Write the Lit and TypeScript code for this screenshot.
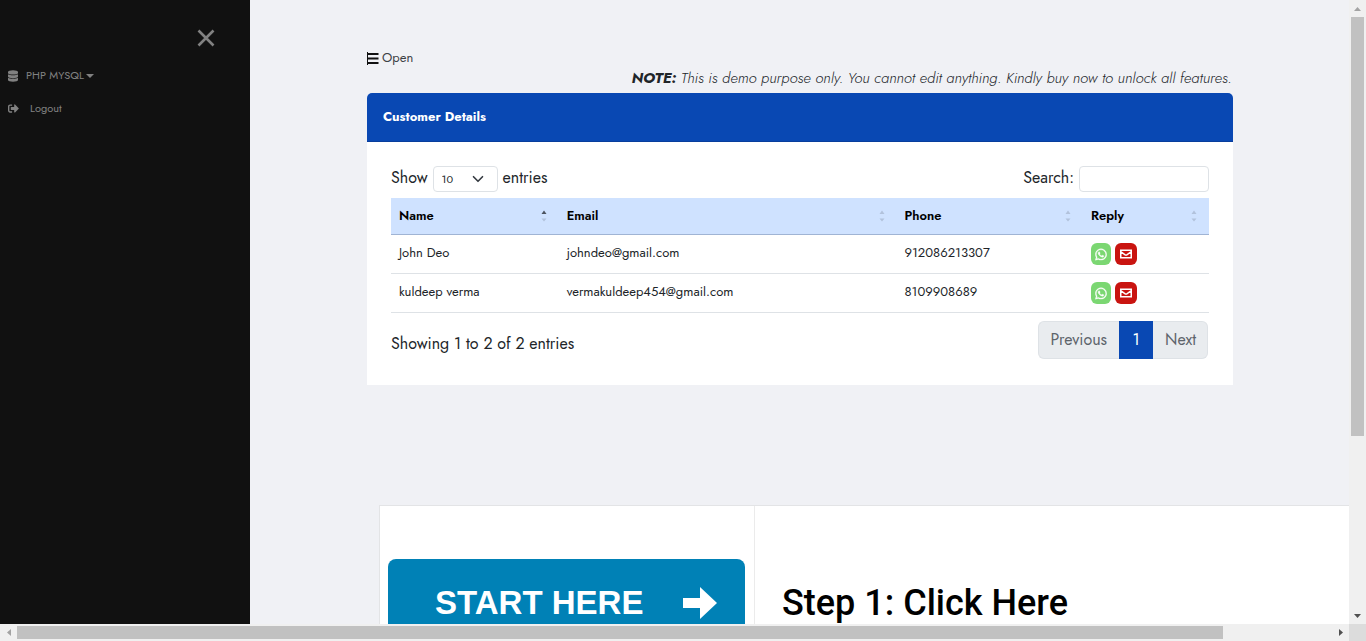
import { LitElement, html, css, svg } from "lit";
import { customElement, property, state } from "lit/decorators.js";

interface Customer {
  name: string;
  email: string;
  phone: string;
}

const CUSTOMERS: Customer[] = [
  { name: "John Deo", email: "johndeo@gmail.com", phone: "912086213307" },
  { name: "kuldeep verma", email: "vermakuldeep454@gmail.com", phone: "8109908689" },
];

const COLUMNS = ["Name", "Email", "Phone", "Reply"];

const whatsappPath = svg`<path fill="currentColor" stroke="currentColor" stroke-width="14" d="M380.9 97.1C339 55.1 283.2 32 223.9 32c-122.4 0-222 99.6-222 222 0 39.1 10.2 77.3 29.6 111L0 480l117.7-30.9c32.400 17.700 68.900 27 106.100 27h.1c122.300 0 224.100-99.600 224.100-222 0-59.300-25.200-115-67.100-157zm-157 341.600c-33.200 0-65.700-8.900-94-25.700l-6.700-4-69.800 18.300L72 359.200l-4.400-7c-18.500-29.400-28.200-63.300-28.200-98.200 0-101.700 82.800-184.500 184.600-184.500 49.300 0 95.600 19.200 130.400 54.100 34.800 34.900 56.200 81.200 56.100 130.500 0 101.800-84.900 184.600-186.600 184.600zm101.200-138.200c-5.500-2.800-32.800-16.200-37.900-18-5.100-1.900-8.800-2.800-12.500 2.800-3.700 5.600-14.300 18-17.600 21.800-3.200 3.700-6.500 4.200-12 1.400-32.600-16.300-54-29.100-75.500-66-5.700-9.800 5.700-9.100 16.300-30.300 1.800-3.700.9-6.900-.5-9.700-1.400-2.800-12.500-30.100-17.100-41.200-4.500-10.800-9.100-9.300-12.500-9.500-3.200-.2-6.900-.2-10.600-.2-3.700 0-9.700 1.400-14.800 6.900-5.100 5.600-19.400 19-19.400 46.300 0 27.300 19.900 53.700 22.600 57.400 2.800 3.700 39.100 59.700 94.800 83.800 35.200 15.200 49 16.500 66.600 13.900 10.700-1.600 32.800-13.400 37.400-26.400 4.600-13 4.600-24.100 3.200-26.400-1.300-2.500-5-3.900-10.500-6.600z"/>`;

@customElement("side-menu")
class SideMenu extends LitElement {
  static styles = css`
    :host {
      display: block;
      background: #111;
      color: #818181;
      font-size: 11px;
      line-height: 17px;
    }
    .top {
      display: flex;
      justify-content: flex-end;
      padding: 29px 35px 20px 0;
    }
    .close {
      display: block;
      padding: 0;
      border: 0;
      background: none;
      color: inherit;
      height: 18px;
    }
    .close svg { display: block; }
    .links {
      display: flex;
      flex-direction: column;
      gap: 16px;
      padding-left: 8px;
    }
    .link {
      display: flex;
      align-items: center;
      color: inherit;
      text-decoration: none;
    }
    .database { margin-right: 8px; }
    .logout { margin-right: 11px; }
    .caret {
      margin-left: 2px;
      border: 4px solid transparent;
      border-top-color: currentColor;
      border-bottom: 0;
    }
  `;

  render() {
    return html`
      <div class="top">
        <button class="close" aria-label="Close menu">
          <svg width="18" height="18" viewBox="0 0 18 18" stroke="currentColor" stroke-width="2.600">
            <path d="M1.500 1.500 16.500 16.500M16.500 1.500 1.500 16.500" />
          </svg>
        </button>
      </div>
      <nav class="links">
        <a class="link" href="#">
          <svg class="database" width="10" height="12" viewBox="0 0 448 512" fill="currentColor">
            <path d="M448 73.100v45.800C448 159.100 347.700 192 224 192S0 159.100 0 118.900V73.100C0 32.900 100.300 0 224 0s224 32.900 224 73.100zM448 176v102.900C448 319.100 347.700 352 224 352S0 319.100 0 278.900V176c48.100 33.100 136.200 48.600 224 48.600S399.900 209.100 448 176zm0 160v102.900C448 479.100 347.700 512 224 512S0 479.100 0 438.900V336c48.100 33.100 136.200 48.600 224 48.600S399.900 369.100 448 336z" />
          </svg>
          PHP MYSQL<span class="caret"></span>
        </a>
        <a class="link" href="#">
          <svg class="logout" width="11" height="11" viewBox="0 0 512 512" fill="currentColor">
            <path d="M497 273 329 441c-15 15-41 4.500-41-17v-96H152c-13.300 0-24-10.700-24-24v-96c0-13.300 10.700-24 24-24h136V88c0-21.400 25.900-32 41-17l168 168c9.300 9.400 9.300 24.600 0 34zM192 436v-40c0-6.600-5.400-12-12-12H96c-17.700 0-32-14.300-32-32V160c0-17.700 14.300-32 32-32h84c6.600 0 12-5.400 12-12V76c0-6.600-5.400-12-12-12H96c-53 0-96 43-96 96v192c0 53 43 96 96 96h84c6.600 0 12-5.400 12-12z" />
          </svg>
          Logout
        </a>
      </nav>
    `;
  }
}

@customElement("customer-card")
class CustomerCard extends LitElement {
  @state() private query = "";

  static styles = css`
    :host {
      display: block;
      background: #fff;
      border-radius: 5px 5px 0 0;
      color: #212529;
      font-size: 16px;
      line-height: 24px;
    }
    .title {
      margin: 0;
      padding: 12px 16px;
      border-bottom: 1px solid #083d9c;
      border-radius: 5px 5px 0 0;
      background: #0948b3;
      color: #fff;
      font-size: 13px;
      line-height: 24px;
      font-weight: 700;
    }
    .body { padding: 24px 24px 26px; }
    .tools {
      display: flex;
      justify-content: space-between;
      margin-bottom: 6px;
    }
    .field {
      display: flex;
      align-items: flex-start;
      gap: 5px;
    }
    .pick {
      display: grid;
      align-items: center;
    }
    .pick > * { grid-area: 1 / 1; }
    .pick svg {
      justify-self: end;
      margin-right: 14px;
      pointer-events: none;
    }
    .control {
      box-sizing: border-box;
      height: 26px;
      padding: 0 8px;
      border: 1px solid #dee2e6;
      border-radius: 4px;
      background: #fff;
      color: #212529;
      font-family: inherit;
      font-size: 11px;
    }
    select.control {
      width: 65px;
      appearance: none;
    }
    input.control { width: 130px; }
    .table {
      width: 100%;
      table-layout: fixed;
      border-collapse: separate;
      border-spacing: 0;
      font-size: 13px;
      line-height: 20px;
    }
    .table th {
      box-sizing: border-box;
      padding: 8px;
      border-bottom: 1px solid #a0b4d4;
      background: #cfe2ff;
      color: #000;
      font-weight: 600;
      text-align: left;
    }
    .table td {
      height: 22px;
      padding: 8px;
      border-bottom: 1px solid #dee2e6;
      line-height: 20px;
      vertical-align: top;
    }
    .c0 { width: 20.500%; }
    .c1 { width: 41.300%; }
    .c2 { width: 22.800%; }
    .head {
      display: flex;
      align-items: center;
      justify-content: space-between;
      padding-right: 4px;
    }
    .sort {
      display: block;
      color: #b2c2dc;
    }
    .up { color: #4c535f; }
    .reply {
      display: flex;
      gap: 4px;
    }
    .badge {
      display: grid;
      place-items: center;
      height: 22px;
      border-radius: 6px;
      color: #fff;
    }
    .chat { width: 20px; background: #7bd772; }
    .mail { width: 22px; background: #c91410; }
    .foot {
      display: flex;
      justify-content: space-between;
      align-items: center;
      padding: 8px 1px 0 0;
    }
    .info { padding-top: 7px; }
    .pages { display: flex; }
    .page {
      box-sizing: border-box;
      height: 38px;
      padding: 0 12px;
      border: 1px solid #dee2e6;
      background: #e9ecef;
      color: #5d646b;
      font: inherit;
    }
    .prev {
      border-right: 0;
      border-radius: 6px 0 0 6px;
    }
    .next {
      padding: 0 11px 0 12px;
      border-left: 0;
      border-radius: 0 6px 6px 0;
    }
    .current {
      width: 34px;
      border-color: #0948b3;
      background: #0948b3;
      color: #fff;
    }
  `;

  private onSearch(e: Event) {
    this.query = (e.target as HTMLInputElement).value.toLowerCase();
  }

  render() {
    const rows = CUSTOMERS.filter((c) =>
      [c.name, c.email, c.phone].some((v) => v.toLowerCase().includes(this.query))
    );
    return html`
      <h1 class="title">Customer Details</h1>
      <div class="body">
        <div class="tools">
          <div class="field">
            <label for="length">Show</label>
            <span class="pick">
              <select id="length" class="control">
                <option>10</option>
                <option>25</option>
                <option>50</option>
                <option>100</option>
              </select>
              <svg width="12" height="12" viewBox="0 0 16 16" fill="none" stroke="#343a40" stroke-width="2.200" stroke-linecap="round" stroke-linejoin="round">
                <path d="m2 5 6 6 6-6" />
              </svg>
            </span>
            <label for="length">entries</label>
          </div>
          <div class="field">
            <label for="search">Search:</label>
            <input id="search" class="control" type="search" @input=${this.onSearch} />
          </div>
        </div>
        <table class="table">
          <thead>
            <tr>
              ${COLUMNS.map(
                (label, i) => html`<th class="c${i}">
                  <div class="head">
                    ${label}
                    <svg class="sort" width="6" height="12" viewBox="0 0 6 12" fill="currentColor">
                      <path class=${i === 0 ? "up" : ""} d="M3 0.500 5.500 4H0.500z" />
                      <path d="M3 11.500 5.500 8.500H0.500z" />
                    </svg>
                  </div>
                </th>`
              )}
            </tr>
          </thead>
          <tbody>
            ${rows.map(
              (c) => html`<tr>
                <td>${c.name}</td>
                <td>${c.email}</td>
                <td>${c.phone}</td>
                <td>
                  <div class="reply">
                    <a class="badge chat" href="#" aria-label="WhatsApp">
                      <svg width="12" height="13" viewBox="0 0 448 512">${whatsappPath}</svg>
                    </a>
                    <a class="badge mail" href="#" aria-label="Email">
                      <svg width="12" height="10" viewBox="0 0 12 10" fill="none" stroke="currentColor" stroke-width="1.500">
                        <path d="M.75 1.250h10.500v7.500H.75zM1 2.750 4.800 5.700q1.200.8 2.400 0L11 2.750" />
                      </svg>
                    </a>
                  </div>
                </td>
              </tr>`
            )}
          </tbody>
        </table>
        <div class="foot">
          <div class="info">Showing 1 to 2 of 2 entries</div>
          <div class="pages">
            <button class="page prev">Previous</button>
            <button class="page current">1</button>
            <button class="page next">Next</button>
          </div>
        </div>
      </div>
    `;
  }
}

@customElement("promo-banner")
class PromoBanner extends LitElement {
  static styles = css`
    :host {
      display: grid;
      grid-template-columns: 375px 1fr;
      box-sizing: border-box;
      height: 250px;
      border: 1px solid #e3e4e6;
      border-right: 0;
      background: #fff;
    }
    .left {
      box-sizing: border-box;
      padding: 53px 9px 0 8px;
      border-right: 1px solid #ebebeb;
    }
    .start {
      display: flex;
      align-items: center;
      justify-content: space-between;
      height: 88px;
      padding: 0 28px 0 47px;
      border-radius: 8px;
      background: #0081b6;
      color: #fff;
      font: bold 33px "Liberation Sans", Arial, sans-serif;
      text-decoration: none;
      white-space: nowrap;
    }
    .step {
      margin: 0;
      padding: 75px 0 0 27px;
      color: #000;
      font: 500 36px/44px Roboto, sans-serif;
    }
  `;

  render() {
    return html`
      <div class="left">
        <a class="start" href="#">
          START HERE
          <svg width="34" height="32" viewBox="0 0 34 32" fill="currentColor">
            <path d="M0 11h17V0l17 16-17 16V21H0z" />
          </svg>
        </a>
      </div>
      <h2 class="step">Step 1: Click Here</h2>
    `;
  }
}

@customElement("scroll-track")
class ScrollTrack extends LitElement {
  @property({ type: Boolean, reflect: true }) vertical = false;

  static styles = css`
    :host {
      display: flex;
      background: #f0f0f0;
    }
    :host([vertical]) { flex-direction: column; }
    .end {
      flex: none;
      display: grid;
      place-items: center;
      width: 17px;
      height: 17px;
      color: #505050;
    }
    .idle { color: #a3a3a3; }
    .rail {
      flex: 1;
      display: flex;
      padding: 2px 0;
    }
    :host([vertical]) .rail {
      flex-direction: column;
      padding: 0 2px;
    }
    .thumb {
      width: 91.700%;
      background: #c1c1c1;
    }
    :host([vertical]) .thumb {
      width: auto;
      height: 71%;
    }
  `;

  render() {
    const back = this.vertical ? "M0 4 3.500 0 7 4z" : "M4 0 0 3.500 4 7z";
    const forward = this.vertical ? "M0 0 3.500 4 7 0z" : "M0 0 4 3.500 0 7z";
    const w = this.vertical ? 7 : 4;
    const h = this.vertical ? 4 : 7;
    return html`
      <span class="end idle"><svg width=${w} height=${h} fill="currentColor"><path d=${back} /></svg></span>
      <span class="rail"><span class="thumb"></span></span>
      <span class="end"><svg width=${w} height=${h} fill="currentColor"><path d=${forward} /></svg></span>
    `;
  }
}

@customElement("app-root")
class AppRoot extends LitElement {
  static styles = css`
    :host {
      display: grid;
      grid-template-columns: minmax(0, 1fr) 17px;
      grid-template-rows: minmax(0, 1fr) 17px;
      height: 100vh;
      background: #dcdcdc;
      font-family: Jost, Lato, sans-serif;
    }
    .view {
      display: grid;
      grid-template-columns: 250px minmax(0, 1fr);
      overflow: hidden;
      background: #f0f1f5;
    }
    .main {
      overflow: hidden;
      padding: 48px 0 0 117px;
      color: #212529;
    }
    .content { margin-right: 116px; }
    .open {
      display: flex;
      align-items: center;
      gap: 3px;
      padding: 0;
      border: 0;
      background: none;
      color: #3d4145;
      font: 13px/20px Jost, Lato, sans-serif;
    }
    .note {
      margin: 0 1px 5px 0;
      font-size: 15px;
      font-weight: 300;
      line-height: 20px;
      font-style: italic;
      text-align: right;
    }
    .note b { font-weight: 700; }
    .promo { margin: 120px 0 0 12px; }
  `;

  render() {
    return html`
      <div class="view">
        <side-menu></side-menu>
        <main class="main">
          <div class="content">
            <button class="open">
              <svg width="12" height="13" viewBox="0 0 12 13" fill="none" stroke="#111">
                <path d="M.5 0v13" />
                <path stroke-width="1.800" d="M0 2h11.500M0 6.500h11.500M0 11h11.500" />
              </svg>
              Open
            </button>
            <p class="note"><b>NOTE:</b> This is demo purpose only. You cannot edit anything. Kindly buy now to unlock all features.</p>
            <customer-card></customer-card>
          </div>
          <promo-banner class="promo"></promo-banner>
        </main>
      </div>
      <scroll-track vertical></scroll-track>
      <scroll-track></scroll-track>
    `;
  }
}
